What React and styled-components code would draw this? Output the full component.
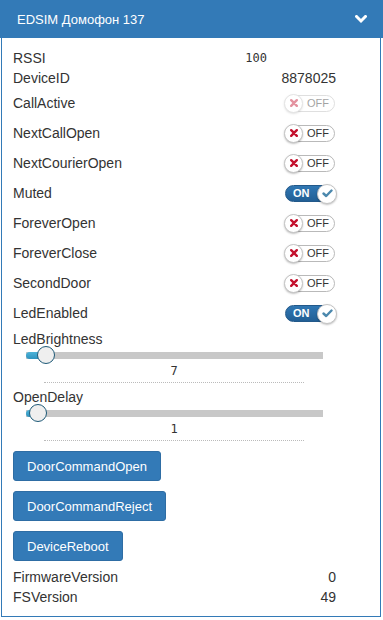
import React from 'react';
import styled, { createGlobalStyle } from 'styled-components';

const GlobalStyle = createGlobalStyle`
  html, body {
    margin: 0;
    padding: 0;
    background: #fff;
    font-family: "Liberation Sans", Arial, sans-serif;
    color: #333;
  }
`;

const Panel = styled.div`
  width: 383px;
  height: 620px;
  display: flex;
  flex-direction: column;
`;

const Header = styled.div`
  height: 38px;
  flex-shrink: 0;
  background: #337ab7;
  color: #fff;
  display: flex;
  align-items: center;
  justify-content: space-between;
  padding: 0 16px 0 17px;
  font-size: 13px;
`;

const Body = styled.div`
  margin: 0 2px 3px 1px;
  border: 1px solid #337ab7;
  border-top: none;
  flex: 1;
  padding: 10px 0 0 11px;
  display: flex;
  flex-direction: column;
`;

const Row = styled.div`
  display: flex;
  align-items: center;
  height: ${(p) => p.h || 20}px;
  font-size: 14px;
  width: 323px;
`;

const Label = styled.div`
  flex: 1;
`;

const Value = styled.div`
  font-family: ${(p) => (p.mono ? '"DejaVu Sans Mono", monospace' : '"Liberation Sans", Arial, sans-serif')};
  font-size: ${(p) => (p.mono ? '12px' : '14px')};
  padding-right: ${(p) => p.offset || 0}px;
`;

const Toggle = styled.div`
  position: relative;
  width: 50px;
  height: 17px;
  border-radius: 9px;
  box-sizing: border-box;
  border: 1px solid ${(p) => (p.on ? '#23598a' : '#b9b9b9')};
  background: ${(p) => (p.on ? 'linear-gradient(#3077b3, #225f95)' : '#fff')};
  opacity: ${(p) => (p.disabled ? 0.45 : 1)};
  margin-right: 1px;
`;

const ToggleText = styled.span`
  position: absolute;
  top: 0;
  bottom: 0;
  display: flex;
  align-items: center;
  font-size: 11px;
  ${(p) => (p.on ? 'left: 7px; color: #fff; font-weight: bold;' : 'left: 21px; color: #333;')}
`;

const Knob = styled.div`
  position: absolute;
  top: -2px;
  ${(p) => (p.on ? 'right: -3px;' : 'left: -2px;')}
  width: ${(p) => (p.on ? 20 : 19)}px;
  height: ${(p) => (p.on ? 20 : 19)}px;
  box-sizing: border-box;
  border-radius: 50%;
  background: #fff;
  border: 1px solid #c4c4c4;
  box-shadow: 0 1px 2px rgba(0, 0, 0, 0.25);
  display: flex;
  align-items: center;
  justify-content: center;
`;

const SliderBlock = styled.div`
  display: flex;
  flex-direction: column;
  margin-top: ${(p) => p.mt || 0}px;
  margin-bottom: 4px;
`;

const SliderLabel = styled.div`
  height: 20px;
  line-height: 20px;
  font-size: 14px;
`;

const TrackWrap = styled.div`
  position: relative;
  height: 12px;
  margin-left: 13px;
  width: 297px;
  display: flex;
  align-items: center;
`;

const Track = styled.div`
  width: 100%;
  height: 7px;
  background: #c8c8c8;
`;

const Fill = styled.div`
  position: absolute;
  left: 0;
  top: 2.5px;
  height: 7px;
  border-radius: 4px 0 0 4px;
  background: linear-gradient(#4cb3d8, #2f93bf);
`;

const Thumb = styled.div`
  position: absolute;
  top: -3px;
  width: 18px;
  height: 18px;
  margin-left: -9px;
  box-sizing: border-box;
  border-radius: 50%;
  border: 1.5px solid #1d5977;
  background: #efefef;
`;

const SliderValue = styled.div`
  margin-left: 31px;
  width: 260px;
  height: 21px;
  border-bottom: 1px dotted #bbb;
  text-align: center;
  font-family: "DejaVu Sans Mono", monospace;
  font-size: 12px;
  line-height: 21px;
`;

const Button = styled.button`
  align-self: flex-start;
  height: 30px;
  padding: 0 13px;
  margin-top: ${(p) => p.mt || 0}px;
  background: #337ab7;
  border: 1px solid #2e6da4;
  border-radius: 3px;
  color: #fff;
  font-family: "Liberation Sans", Arial, sans-serif;
  font-size: 13px;
`;

const Spacer = styled.div`
  height: ${(p) => p.h}px;
`;

const Chevron = () => (
  <svg width="12" height="9" viewBox="0 0 12 9">
    <path d="M1.5 1.5 L6 6 L10.5 1.5" fill="none" stroke="#fff" strokeWidth="3" strokeLinecap="square" />
  </svg>
);

const Cross = () => (
  <svg width="8" height="8" viewBox="0 0 8 8">
    <path d="M1.2 1.2 L6.8 6.8 M6.8 1.2 L1.2 6.8" stroke="#c4122f" strokeWidth="2.4" strokeLinecap="round" />
  </svg>
);

const Check = () => (
  <svg width="11" height="9" viewBox="0 0 11 9">
    <path d="M1.5 4.5 L4.2 7 L9.5 1.5" fill="none" stroke="#4b88ad" strokeWidth="2.4" strokeLinecap="round" strokeLinejoin="round" />
  </svg>
);

function Switch({ on, disabled }) {
  return (
    <Toggle on={on} disabled={disabled}>
      <ToggleText on={on}>{on ? 'ON' : 'OFF'}</ToggleText>
      <Knob on={on}>{on ? <Check /> : <Cross />}</Knob>
    </Toggle>
  );
}

function Slider({ label, value, pct, mt }) {
  const travel = 297 - 18;
  return (
    <SliderBlock mt={mt}>
      <SliderLabel>{label}</SliderLabel>
      <TrackWrap>
        <Track />
        <Fill style={{ width: 9 + pct * travel + 'px' }} />
        <Thumb style={{ left: 9 + pct * travel + 'px' }} />
      </TrackWrap>
      <SliderValue>{value}</SliderValue>
    </SliderBlock>
  );
}

const switches = [
  ['CallActive', false, true],
  ['NextCallOpen', false],
  ['NextCourierOpen', false],
  ['Muted', true],
  ['ForeverOpen', false],
  ['ForeverClose', false],
  ['SecondDoor', false],
  ['LedEnabled', true],
];

export default function App() {
  return (
    <>
      <GlobalStyle />
      <Panel>
        <Header>
          <span>EDSIM Домофон 137</span>
          <Chevron />
        </Header>
        <Body>
          <Row>
            <Label>RSSI</Label>
            <Value mono offset={69}>100</Value>
          </Row>
          <Row>
            <Label>DeviceID</Label>
            <Value>8878025</Value>
          </Row>
          {switches.map(([name, on, disabled]) => (
            <Row key={name} h={30}>
              <Label>{name}</Label>
              <Switch on={on} disabled={disabled} />
            </Row>
          ))}
          <Slider label="LedBrightness" value="7" pct={0.04} mt={1} />
          <Slider label="OpenDelay" value="1" pct={0.011} />
          <Button mt={6}>DoorCommandOpen</Button>
          <Button mt={10}>DoorCommandReject</Button>
          <Button mt={10}>DeviceReboot</Button>
          <Spacer h={6} />
          <Row>
            <Label>FirmwareVersion</Label>
            <Value>0</Value>
          </Row>
          <Row>
            <Label>FSVersion</Label>
            <Value>49</Value>
          </Row>
        </Body>
      </Panel>
    </>
  );
}
